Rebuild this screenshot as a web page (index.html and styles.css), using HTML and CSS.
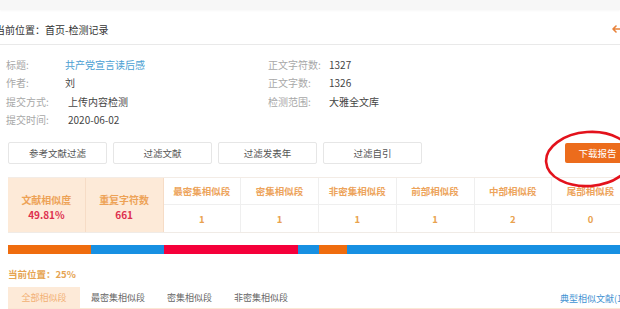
FILE: index.html
```html
<!DOCTYPE html>
<html lang="zh">
<head>
<meta charset="utf-8">
<title>检测记录</title>
<link rel="stylesheet" href="styles.css">
</head>
<body>
<div class="topband"></div>
<div class="page">
  <header class="crumb">
    <span class="crumb-text">当前位置：首页-检测记录</span>
    <svg class="back" width="12" height="8" viewBox="0 0 12 8"><path d="M4 1 L1 4 L4 7 M1 4 H11" fill="none" stroke="#e8823a" stroke-width="1.6" stroke-linecap="round" stroke-linejoin="round"/></svg>
  </header>

  <section class="info">
    <span class="lbl">标题:</span><span class="val link">共产党宣言读后感</span><span class="lbl">正文字符数:</span><span class="val">1327</span>
    <span class="lbl">作者:</span><span class="val">刘</span><span class="lbl">正文字数:</span><span class="val">1326</span>
    <span class="lbl">提交方式:</span><span class="val ind">上传内容检测</span><span class="lbl">检测范围:</span><span class="val">大雅全文库</span>
    <span class="lbl">提交时间:</span><span class="val ind">2020-06-02</span>
  </section>

  <div class="actions">
    <button class="btn">参考文献过滤</button>
    <button class="btn">过滤文献</button>
    <button class="btn">过滤发表年</button>
    <button class="btn">过滤自引</button>
    <button class="btn-dl">下载报告</button>
  </div>

  <div class="stats">
    <div class="cell main"><span class="k">文献相似度</span><span class="v red">49.81%</span></div>
    <div class="cell main"><span class="k">重复字符数</span><span class="v red">661</span></div>
    <div class="cell head">最密集相似段</div>
    <div class="cell head">密集相似段</div>
    <div class="cell head">非密集相似段</div>
    <div class="cell head">前部相似段</div>
    <div class="cell head">中部相似段</div>
    <div class="cell head">尾部相似段</div>
    <div class="cell num">1</div>
    <div class="cell num">1</div>
    <div class="cell num">1</div>
    <div class="cell num">1</div>
    <div class="cell num">2</div>
    <div class="cell num">0</div>
  </div>

  <div class="bar">
    <span class="seg orange" style="width:83px"></span>
    <span class="seg blue" style="width:73px"></span>
    <span class="seg red" style="width:134px"></span>
    <span class="seg blue" style="width:21px"></span>
    <span class="seg orange" style="width:28px"></span>
    <span class="seg blue fill"></span>
  </div>

  <div class="pos">当前位置：25%</div>

  <nav class="tabs">
    <span class="tab active">全部相似段</span>
    <span class="tab">最密集相似段</span>
    <span class="tab">密集相似段</span>
    <span class="tab">非密集相似段</span>
    <span class="typical">典型相似文献(12)</span>
  </nav>
</div>

<svg class="mark" width="92" height="60" viewBox="0 0 92 60"><ellipse cx="46" cy="30" rx="43" ry="27" fill="none" stroke="#e3121c" stroke-width="2.6" transform="rotate(-4 46 30)"/></svg>
</body>
</html>
```

FILE: styles.css
```css
html, body {
  margin: 0;
  padding: 0;
  overflow: hidden;
  background: #fff;
}
body {
  width: 620px;
  height: 309px;
  position: relative;
  font-family: "Noto Sans CJK SC", "Noto Sans", sans-serif;
  color: #444;
}
.topband {
  height: 10px;
  background: #f7f7f7;
  box-shadow: 0 1px 2px rgba(0,0,0,0.03);
}
.page {
  width: 638px;
  box-sizing: border-box;
  padding: 0 8px;
}
.crumb {
  display: flex;
  align-items: center;
  height: 35px;
  margin: 0 -8px;
  border-bottom: 1px solid #e9e9e9;
  padding-top: 4px;
  box-sizing: border-box;
}
.crumb-text {
  font-size: 10px;
  color: #333;
  margin-left: -5px;
}
.back {
  margin-left: auto;
  margin-right: 14px;
}
.info {
  display: grid;
  grid-template-columns: 59px 203px 61px 1fr;
  grid-auto-rows: 18.5px;
  align-items: center;
  margin-left: -2px;
  padding-top: 10px;
  font-size: 10px;
}
.lbl { color: #a8a8a8; }
.val { color: #444; }
.val.link { color: #4aa0d2; }
.val.ind { padding-left: 3px; }

.actions {
  display: flex;
  align-items: center;
  gap: 6px;
  margin-top: 13px;
  height: 22px;
}
.btn {
  width: 99px;
  height: 22px;
  background: #fff;
  border: 1px solid #e6e6e6;
  border-radius: 2px;
  font-family: inherit;
  font-size: 9.5px;
  color: #555;
  padding: 0;
}
.btn-dl {
  margin-left: auto;
  width: 65px;
  height: 20px;
  border: none;
  border-radius: 2px;
  background: #ec6c1c;
  color: #fff;
  font-family: inherit;
  font-size: 9.5px;
  padding: 0;
}

.stats {
  display: grid;
  grid-template-columns: repeat(8, 1fr);
  grid-template-rows: 27px 27px;
  margin-top: 13px;
  border-top: 1px solid #f3ece6;
  border-bottom: 1px solid #f0ebe6;
}
.cell {
  display: flex;
  align-items: center;
  justify-content: center;
  border-right: 1px solid #efefef;
  font-size: 9.5px;
  font-weight: 700;
}
.cell.main {
  grid-row: span 2;
  flex-direction: column;
  background: #fdead8;
  border-right: 1px solid #f6dcc6;
  gap: 1px;
  padding-top: 2px;
}
.cell.main .k {
  color: #eda256;
  font-size: 10px;
}
.cell.main .v {
  font-size: 10px;
  line-height: 13px;
}
.v.red { color: #de2f4e; }
.cell.head {
  color: #eda45c;
  border-bottom: 1px solid #efefef;
}
.cell.num {
  color: #e9a24e;
}

.bar {
  display: flex;
  height: 9px;
  margin-top: 12px;
}
.seg { display: block; height: 100%; }
.seg.orange { background: #ef6c0e; }
.seg.blue { background: #1790e2; }
.seg.red { background: #f5003a; }
.seg.fill { flex: 1; }

.pos {
  margin-top: 13px;
  line-height: 14px;
  font-size: 9.5px;
  font-weight: 700;
  color: #e6a452;
}

.tabs {
  display: flex;
  align-items: center;
  height: 21px;
  margin-top: 6px;
  border-bottom: 1px solid #fbe7d4;
}
.tab {
  height: 100%;
  display: flex;
  align-items: center;
  padding: 0 11px;
  font-size: 9px;
  color: #666;
}
.tab.active {
  width: 72px;
  box-sizing: border-box;
  justify-content: center;
  background: #fdead8;
  color: #f2b074;
}
.typical {
  margin-left: auto;
  font-size: 9px;
  color: #3f92d2;
  padding-top: 1px;
}

.mark {
  position: absolute;
  left: 543px;
  top: 129px;
}
```
